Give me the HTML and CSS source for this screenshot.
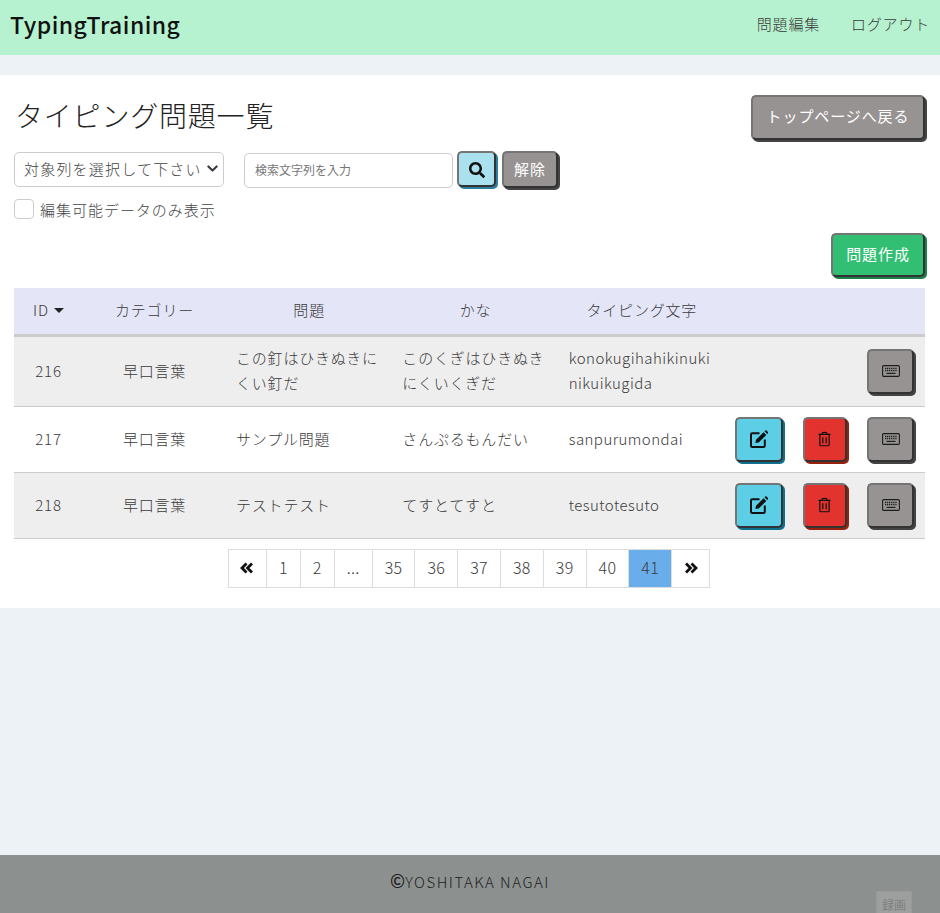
FILE: index.html
```html
<!DOCTYPE html>
<html lang="ja">
<head>
  <meta charset="UTF-8">
  <meta name="viewport" content="width=device-width, initial-scale=1.0">
  <title>タイピング問題一覧</title>
  <link rel="stylesheet" href="styles.css">
</head>
<body>
  <header class="navbar">
    <a class="brand">TypingTraining</a>
    <nav class="nav-links">
      <a>問題編集</a>
      <a>ログアウト</a>
    </nav>
  </header>

  <main class="content">
    <div class="title-row">
      <h1>タイピング問題一覧</h1>
      <button class="btn btn-gray btn-back">トップページへ戻る</button>
    </div>

    <div class="search-row">
      <div class="select-box">
        <span>対象列を選択して下さい</span>
        <svg class="chevron" viewBox="0 0 16 16"><path d="M2 5l6 6 6-6" fill="none" stroke="#343a40" stroke-width="3" stroke-linecap="round" stroke-linejoin="round"/></svg>
      </div>
      <input class="search-input" type="text" placeholder="検索文字列を入力">
      <button class="btn btn-search">
        <svg viewBox="0 0 512 512" width="16" height="16"><path fill="#111" d="M505 442.700L405.300 343c-4.500-4.500-10.600-7-17-7H372c27.600-35.300 44-79.700 44-128C416 93.100 322.900 0 208 0S0 93.100 0 208s93.100 208 208 208c48.300 0 92.700-16.400 128-44v16.300c0 6.400 2.500 12.500 7 17l99.700 99.700c9.400 9.400 24.600 9.400 33.900 0l28.300-28.300c9.400-9.400 9.400-24.600.1-34zM208 336c-70.700 0-128-57.200-128-128 0-70.700 57.200-128 128-128 70.700 0 128 57.200 128 128 0 70.700-57.200 128-128 128z"/></svg>
      </button>
      <button class="btn btn-gray btn-clear">解除</button>
    </div>

    <label class="check-row">
      <span class="check-box"></span>
      <span>編集可能データのみ表示</span>
    </label>

    <div class="create-row">
      <button class="btn btn-green btn-create">問題作成</button>
    </div>

    <table class="problem-table">
      <colgroup>
        <col class="col-id"><col class="col-cat"><col class="col-text"><col class="col-text"><col class="col-text">
        <col class="col-edit"><col class="col-del"><col class="col-key">
      </colgroup>
      <thead>
        <tr>
          <th>ID <span class="caret"></span></th>
          <th>カテゴリー</th>
          <th>問題</th>
          <th>かな</th>
          <th>タイピング文字</th>
          <th></th><th></th><th></th>
        </tr>
      </thead>
      <tbody>
        <tr>
          <td class="center">216</td>
          <td class="center">早口言葉</td>
          <td>この釘はひきぬきにくい釘だ</td>
          <td>このくぎはひきぬきにくいくぎだ</td>
          <td class="typing">konokugihahikinuki<br>nikuikugida</td>
          <td></td>
          <td></td>
          <td class="actions"><button class="btn btn-gray btn-key"><svg class="key-icon" viewBox="0 0 18 12"><use href="#keyboard"/></svg></button></td>
        </tr>
        <tr>
          <td class="center">217</td>
          <td class="center">早口言葉</td>
          <td>サンプル問題</td>
          <td>さんぷるもんだい</td>
          <td class="typing">sanpurumondai</td>
          <td class="actions"><button class="btn btn-blue btn-edit"><svg class="edit-icon" viewBox="0 0 18 18"><use href="#edit"/></svg></button></td>
          <td class="actions"><button class="btn btn-red btn-del"><svg class="trash-icon" viewBox="0 0 14 16"><use href="#trash"/></svg></button></td>
          <td class="actions"><button class="btn btn-gray btn-key"><svg class="key-icon" viewBox="0 0 18 12"><use href="#keyboard"/></svg></button></td>
        </tr>
        <tr>
          <td class="center">218</td>
          <td class="center">早口言葉</td>
          <td>テストテスト</td>
          <td>てすとてすと</td>
          <td class="typing">tesutotesuto</td>
          <td class="actions"><button class="btn btn-blue btn-edit"><svg class="edit-icon" viewBox="0 0 18 18"><use href="#edit"/></svg></button></td>
          <td class="actions"><button class="btn btn-red btn-del"><svg class="trash-icon" viewBox="0 0 14 16"><use href="#trash"/></svg></button></td>
          <td class="actions"><button class="btn btn-gray btn-key"><svg class="key-icon" viewBox="0 0 18 12"><use href="#keyboard"/></svg></button></td>
        </tr>
      </tbody>
    </table>

    <ul class="pagination">
      <li class="arrow">
        <svg viewBox="0 0 14 12" width="14" height="12"><path d="M6.500 1.500L2 6l4.500 4.500M12 1.500L7.500 6l4.500 4.500" fill="none" stroke="#111" stroke-width="2.800"/></svg>
      </li>
      <li>1</li>
      <li>2</li>
      <li class="dots">...</li>
      <li>35</li>
      <li>36</li>
      <li>37</li>
      <li>38</li>
      <li>39</li>
      <li>40</li>
      <li class="current">41</li>
      <li class="arrow">
        <svg viewBox="0 0 14 12" width="14" height="12"><path d="M2 1.500L6.500 6 2 10.500M7.500 1.500L12 6l-4.500 4.500" fill="none" stroke="#111" stroke-width="2.800"/></svg>
      </li>
    </ul>
  </main>

  <footer class="footer">
    <span class="copyright"><span class="copy-mark">©</span>YOSHITAKA NAGAI</span>
    <span class="record-tag">録画</span>
  </footer>

  <svg class="icon-defs" width="0" height="0">
    <symbol id="keyboard" viewBox="0 0 18 12">
      <rect x="0.600" y="0.600" width="16.800" height="10.800" rx="1.200" fill="none" stroke="#1c1c1c" stroke-width="1.100"/>
      <path d="M3 3.500h12M3 5.700h12" stroke="#1c1c1c" stroke-width="1.300" stroke-dasharray="1.200 .7" fill="none"/>
      <path d="M4.500 8.400h9" stroke="#1c1c1c" stroke-width="1.200" fill="none"/>
    </symbol>
    <symbol id="edit" viewBox="0 0 18 18">
      <path d="M9.500 3.200H2.200A1.200 1.200 0 0 0 1 4.400v11.400A1.200 1.200 0 0 0 2.200 17h11.400a1.200 1.200 0 0 0 1.200-1.200V9.500" fill="none" stroke="#111" stroke-width="2"/>
      <path d="M6 9.800L13.600 2.200l2.700 2.700-7.600 7.600-3.300.6zM14.500 1.300l.7-.7a1 1 0 0 1 1.400 0l1.300 1.300a1 1 0 0 1 0 1.400l-.7.7z" fill="#111"/>
    </symbol>
    <symbol id="trash" viewBox="0 0 14 16">
      <path d="M.500 3h13M4.500 3V1.800A1 1 0 0 1 5.500.800h3a1 1 0 0 1 1 1V3M2 3v11.200a1.200 1.200 0 0 0 1.200 1.200h7.600a1.200 1.200 0 0 0 1.200-1.200V3M5.200 6v6.500M8.800 6v6.500" fill="none" stroke="#111" stroke-width="1.300"/>
    </symbol>
  </svg>
</body>
</html>
```

FILE: styles.css
```css
* {
  box-sizing: border-box;
}

html, body {
  height: 100%;
}

body {
  margin: 0;
  display: flex;
  flex-direction: column;
  height: 913px;
  overflow: hidden;
  background-color: #edf2f6;
  color: #333;
  font-family: "Noto Sans CJK JP", "Noto Sans", sans-serif;
  font-weight: 300;
  font-size: 16px;
  letter-spacing: 0.05em;
}

.navbar {
  display: flex;
  align-items: center;
  justify-content: space-between;
  height: 55px;
  padding: 0 10px 8px;
  background-color: #b7f2d0;
}

.brand {
  font-size: 23px;
  font-weight: 500;
  letter-spacing: 0.02em;
  color: #111;
}

.nav-links {
  display: flex;
  gap: 31px;
  font-size: 15px;
  color: #3a3a3a;
}

.content {
  margin-top: 20px;
  padding: 20px 15px 20px 14px;
  height: 533px;
  background-color: #fff;
}

.title-row {
  display: flex;
  align-items: flex-start;
  justify-content: space-between;
  height: 56px;
}

h1 {
  margin: 0 0 0 1px;
  font-size: 28px;
  font-weight: 300;
  line-height: 40px;
  color: #222;
}

.btn {
  border: 2px solid #757575;
  border-right-color: #333;
  border-bottom-color: #333;
  border-radius: 5px;
  font-family: inherit;
  font-weight: 400;
  letter-spacing: 0.06em;
  color: #fff;
  box-shadow: 2px 2px 0 #444;
}

.btn-gray {
  background-color: #979393;
}

.btn-green {
  background-color: #33bf73;
  box-shadow: 2px 2px 0 #1c7f4a;
}

.btn-blue {
  background-color: #5ccfe6;
  box-shadow: 2px 2px 0 #0f6f8f;
}

.btn-red {
  background-color: #e2332e;
  box-shadow: 2px 2px 0 #96210f;
}

.btn-back {
  width: 174px;
  height: 45px;
  padding: 0 0 4px;
  font-size: 15px;
}

.search-row {
  display: flex;
  align-items: flex-start;
  height: 48px;
}

.select-box {
  display: flex;
  align-items: center;
  justify-content: space-between;
  width: 210px;
  height: 35px;
  margin-top: 1px;
  padding: 0 5px 2px 9px;
  border: 1px solid #ccc;
  border-radius: 5px;
  font-size: 15px;
  letter-spacing: 0.08em;
  color: #444;
}

.chevron {
  width: 11px;
  height: 11px;
}

.search-input {
  width: 209px;
  height: 35px;
  margin: 2px 4px 0 20px;
  padding: 0 10px 2px;
  border: 1px solid #ccc;
  border-radius: 5px;
  font-family: inherit;
  font-size: 12px;
  letter-spacing: 0;
}

.search-input::placeholder {
  color: #777;
}

.btn-search {
  display: flex;
  align-items: center;
  justify-content: center;
  width: 39px;
  height: 36px;
  padding: 2px 0 0;
  background-color: #aae1ee;
  box-shadow: 2px 2px 0 #2d7f9f;
}

.btn-clear {
  width: 56px;
  height: 37px;
  margin-left: 6px;
  padding: 0 0 3px;
  font-size: 15px;
}

.check-row {
  display: flex;
  align-items: center;
  gap: 6px;
  height: 20px;
  font-size: 15px;
  letter-spacing: 0.065em;
  color: #444;
}

.check-box {
  width: 20px;
  height: 20px;
  border: 1px solid #ccc;
  border-radius: 4px;
  background-color: #fff;
}

.create-row {
  display: flex;
  justify-content: flex-end;
  height: 55px;
  margin-top: 14px;
}

.btn-create {
  width: 94px;
  height: 44px;
  padding: 0 0 4px;
  font-size: 15px;
}

.problem-table {
  width: 911px;
  table-layout: fixed;
  border-collapse: collapse;
  font-size: 15px;
  color: #3a3a3a;
}

.col-id { width: 69px; }
.col-cat { width: 143px; }
.col-text { width: 166.330px; }
.col-edit { width: 68px; }
.col-del { width: 64px; }
.col-key { width: 68px; }

th {
  height: 47px;
  padding: 0 0 2px;
  font-weight: 300;
  background-color: #e4e6f8;
  border-bottom: 3px solid #ccc;
}

td {
  padding: 5px 10px 7px;
  border-bottom: 1px solid #ccc;
  line-height: 25px;
}

td.center {
  text-align: center;
  padding: 0 0 2px;
}

td.actions {
  text-align: center;
  padding: 0;
}

td.typing {
  letter-spacing: 0.45px;
}

tbody tr {
  height: 66px;
}

tbody tr:nth-child(odd) {
  background-color: #eee;
}

tbody tr:first-child {
  height: 71px;
}

.caret {
  display: inline-block;
  margin-left: 1px;
  border-top: 5px solid #222;
  border-left: 5px solid transparent;
  border-right: 5px solid transparent;
  vertical-align: 3px;
}

.btn-edit, .btn-del, .btn-key {
  display: inline-flex;
  align-items: center;
  justify-content: center;
  height: 45px;
  padding: 0;
  vertical-align: middle;
}

.btn-edit { width: 48px; }
.btn-del { width: 44px; }
.btn-key { width: 47px; }

.key-icon {
  width: 18px;
  height: 12px;
}

.edit-icon {
  width: 18px;
  height: 18px;
}

.trash-icon {
  width: 13px;
  height: 16px;
}

.pagination {
  display: flex;
  justify-content: center;
  margin: 10px 0 0;
  padding: 0;
  list-style: none;
  font-size: 16px;
  letter-spacing: 0.02em;
  color: #3a3a3a;
}

.pagination li {
  display: flex;
  align-items: center;
  justify-content: center;
  height: 39px;
  padding: 0 12px 2px;
  border: 1px solid #ddd;
  margin-left: -1px;
}

.pagination .arrow {
  width: 39px;
  padding: 0;
}

.pagination .current {
  background-color: #69aeea;
}

.footer {
  position: relative;
  display: flex;
  justify-content: center;
  height: 58px;
  margin-top: auto;
  padding-top: 15px;
  background-color: #8c9190;
  color: #222;
  font-size: 15px;
}

.copyright {
  letter-spacing: 0.1em;
}

.copy-mark {
  font-size: 18px;
  font-weight: 500;
  line-height: 20px;
  letter-spacing: 0;
}

.record-tag {
  position: absolute;
  right: 28px;
  top: 36px;
  padding: 4px 5px 0;
  border: 1px solid #999b9b;
  font-size: 12px;
  color: #6f7272;
  background-color: #9d9f9f;
  letter-spacing: 0;
}

.icon-defs {
  position: absolute;
}
```
